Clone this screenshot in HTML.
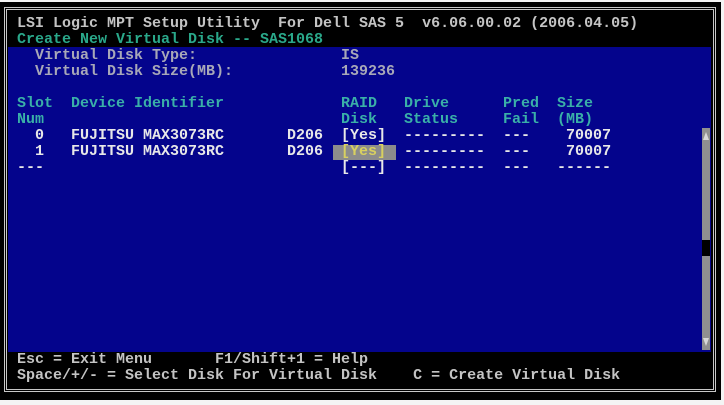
<!DOCTYPE html>
<html><head><meta charset="utf-8"><style>
body{margin:0;width:724px;height:405px;background:#f4f4f4;position:relative;overflow:hidden;font-family:"Liberation Mono",monospace;font-size:15px;}
#scr{position:absolute;left:0;top:2px;width:721px;height:398px;background:#000;}
.b{position:absolute;border:1px solid #c8c8c8;}
#blue{position:absolute;left:8px;top:47px;width:703px;height:305px;background:#04048c;}
.t{position:absolute;white-space:pre;line-height:16px;height:16px;font-weight:bold;}
.w{color:#c4c4c4}.g{color:#2aa88a}.c{color:#3ab0a8}.v{color:#e8e8e8}.l{color:#a8a8b8}
#sb{position:absolute;left:702px;top:128px;width:8px;height:222px;background:#909090;}
</style></head><body>
<div id="scr"></div>
<div class="b" style="left:4px;top:7px;width:710px;height:383px"></div>
<div class="b" style="left:6px;top:9px;width:706px;height:379px"></div>
<div id="blue"></div>
<div id="sb"><div style="position:absolute;left:0;top:112px;width:8px;height:16px;background:#000"></div>
<div style="position:absolute;left:1px;top:4px;width:0;height:0;border-left:3px solid transparent;border-right:3px solid transparent;border-bottom:8px solid #d8d8d8"></div>
<div style="position:absolute;left:1px;top:210px;width:0;height:0;border-left:3px solid transparent;border-right:3px solid transparent;border-top:8px solid #d8d8d8"></div></div>
<div class="t w" style="left:17px;top:16px">LSI Logic MPT Setup Utility  For Dell SAS 5  v6.06.00.02 (2006.04.05)</div>
<div class="t g" style="left:17px;top:32px">Create New Virtual Disk -- SAS1068</div>
<div class="t l" style="left:35px;top:48px">Virtual Disk Type:</div>
<div class="t l" style="left:35px;top:64px">Virtual Disk Size(MB):</div>
<div class="t l" style="left:341px;top:48px">IS</div>
<div class="t l" style="left:341px;top:64px">139236</div>
<div class="t c" style="left:17px;top:96px">Slot  Device Identifier</div>
<div class="t c" style="left:17px;top:112px">Num</div>
<div class="t c" style="left:341px;top:96px">RAID   Drive      Pred  Size</div>
<div class="t c" style="left:341px;top:112px">Disk   Status     Fail  (MB)</div>
<div style="position:absolute;left:333px;top:145px;width:63px;height:15px;background:#8c8c8c"></div>
<div class="t v" style="left:35px;top:128px">0   FUJITSU MAX3073RC</div>
<div class="t v" style="left:287px;top:128px">D206  [Yes]  ---------  ---    70007</div>
<div class="t v" style="left:35px;top:144px">1   FUJITSU MAX3073RC</div>
<div class="t v" style="left:287px;top:144px">D206  <span style="color:#d8d060">[Yes]</span>  ---------  ---    70007</div>
<div class="t v" style="left:17px;top:160px">---</div>
<div class="t v" style="left:341px;top:160px">[---]  ---------  ---   ------</div>
<div class="t w" style="left:17px;top:352px">Esc = Exit Menu       F1/Shift+1 = Help</div>
<div class="t w" style="left:17px;top:368px">Space/+/- = Select Disk For Virtual Disk    C = Create Virtual Disk</div>
</body></html>
